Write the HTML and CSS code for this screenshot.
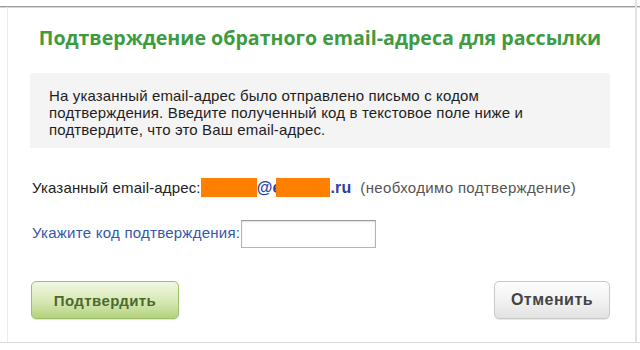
FILE: index.html
```html
<!DOCTYPE html>
<html lang="ru">
<head>
<meta charset="utf-8">
<link rel="stylesheet" href="styles.css">
</head>
<body>
<div class="page">
<div class="dialog">
  <h1 class="title">Подтверждение обратного email-адреса для рассылки</h1>
  <div class="notice">На указанный email-адрес было отправлено письмо с кодом<br>подтверждения. Введите полученный код в текстовое поле ниже и<br>подтвердите, что это Ваш email-адрес.</div>
  <div class="row email-row">
    <span class="label">Указанный email-адрес:</span><span class="mask mask-a"></span><span class="addr">@e</span><span class="mask mask-b"></span><span class="addr">.ru</span><span class="status">(необходимо подтверждение)</span>
  </div>
  <div class="row code-row">
    <label class="code-label" for="code">Укажите код подтверждения:</label>
    <input class="code-input" id="code" type="text">
  </div>
  <div class="actions">
    <button class="btn btn-ok" type="button">Подтвердить</button>
    <button class="btn btn-cancel" type="button">Отменить</button>
  </div>
</div>
</div>
</body>
</html>
```

FILE: styles.css
```css
html, body {
  margin: 0;
  padding: 0;
  background: #ffffff;
}

body {
  position: relative;
  padding-top: 6px;
  font-family: "Liberation Sans", Arial, sans-serif;
  font-size: 15px;
  letter-spacing: 0.15px;
  color: #222;
}

/* decorative right edge of the window frame, running over the full height */
body::after {
  content: "";
  position: absolute;
  left: 635px;
  top: 0;
  width: 2px;
  height: 350px;
  background: #e2e2e2;
}

.page {
  box-sizing: border-box;
  width: 640px;
  height: 337px;
  border-top: 1px solid #9c9c9c;
  border-bottom: 1px solid #dcdcdc;
  box-shadow: inset 0 1px 0 #d6d6d6;
}

.dialog {
  box-sizing: border-box;
  margin-left: 7px;
  width: 628px;
  height: 335px;
  border-left: 1px solid #ececec;
  padding: 17px 25px 0 22px;
}

.title {
  margin: 0;
  font-family: "Open Sans", sans-serif;
  font-weight: 700;
  font-size: 19.6px;
  line-height: 28px;
  color: #3f9b3f;
  text-align: center;
  letter-spacing: 0;
}

.notice {
  margin-top: 21px;
  background: #f4f4f4;
  padding: 14px 19px 10px 19px;
  line-height: 17px;
  color: #1e1e1e;
}

.row {
  padding-left: 2px;
}

.email-row {
  margin-top: 30px;
  line-height: 20px;
  height: 20px;
  white-space: nowrap;
}

.mask {
  display: inline-block;
  height: 19px;
  background: #ff8000;
  vertical-align: -4px;
}

.mask-a {
  width: 56px;
}

.mask-b {
  width: 54px;
  margin-left: -5px;
}

.addr {
  font-weight: 700;
  font-size: 16px;
  color: #2f3ea6;
}

.status {
  margin-left: 9px;
  color: #555;
  letter-spacing: 0.35px;
}

.code-row {
  margin-top: 22px;
  display: flex;
  align-items: center;
  height: 28px;
}

.code-label {
  color: #3558a8;
  letter-spacing: 0.25px;
  padding-bottom: 3px;
  margin-right: 1px;
}

.code-input {
  box-sizing: border-box;
  width: 135px;
  height: 28px;
  margin: 0;
  border: 1px solid #b4b4b4;
  border-top-color: #999;
  box-shadow: inset 0 1px 2px rgba(0,0,0,0.12);
  background: #fff;
  padding: 0 4px;
  font: inherit;
}

.actions {
  margin-top: 33px;
  display: flex;
  justify-content: space-between;
  padding-left: 1px;
}

.btn {
  box-sizing: border-box;
  height: 38px;
  border-radius: 5px;
  font-family: "Liberation Sans", Arial, sans-serif;
  font-weight: 700;
  padding: 0;
  cursor: pointer;
}

.btn-ok {
  width: 148px;
  font-size: 15px;
  letter-spacing: 0.4px;
  border: 1px solid #9dbf66;
  background: linear-gradient(#f1f7e2, #d6e8b4 55%, #b3d27c);
  color: #4b6a2b;
  box-shadow: 0 1px 1px rgba(0,0,0,0.12);
}

.btn-cancel {
  width: 116px;
  font-size: 16px;
  letter-spacing: 0.5px;
  border: 1px solid #c9c9c9;
  background: linear-gradient(#fdfdfd, #f1f1f1 55%, #e2e2e2);
  color: #444;
  box-shadow: 0 1px 1px rgba(0,0,0,0.1);
}
```
